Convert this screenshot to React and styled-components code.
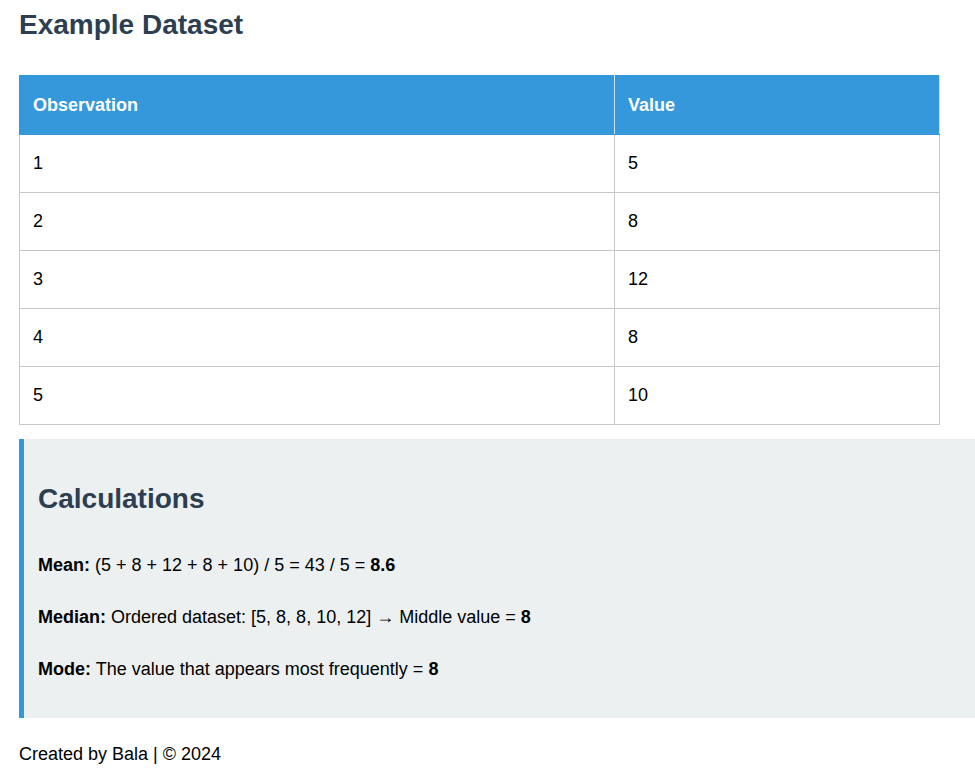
import React from "react";
import styled, { createGlobalStyle } from "styled-components";

const Global = createGlobalStyle`
  body { margin: 0; font-family: "Liberation Sans", Arial, sans-serif; color: #000; background: #fff; overflow: hidden; }
`;
const Page = styled.div`padding: 0 19px;`;
const Title = styled.h1`
  margin: 8px 0 33px; font-size: 28px; line-height: 34px; color: #2c3e50; font-weight: 700;
`;
const Table = styled.table`
  border-collapse: collapse; width: 921px; font-size: 18px;
`;
const Th = styled.th`
  background: #3498db; color: #fff; text-align: left; font-weight: 700;
  height: 58px; padding: 0 13px; border: 1px solid #c8c8c8; border-color: #3498db #d0e4f4 #3498db #3498db;
  &:first-child { width: 568px; }
`;
const Td = styled.td`
  height: 57px; padding: 0 13px; border: 1px solid #c8c8c8;
`;
const Box = styled.div`
  margin: 14px -40px 0 0; background: #ecf0f1; border-left: 5px solid #3498db;
  padding: 43px 20px 35px 14px; display: flex; flex-direction: column; gap: 24px;
`;
const H2 = styled.h2`
  margin: 0 0 11px; font-size: 28px; line-height: 34px; color: #2c3e50; font-weight: 700;
`;
const P = styled.p`margin: 0; font-size: 18px; line-height: 28px;`;
const Footer = styled.footer`margin-top: 25px; font-size: 18px; line-height: 22px;`;

const rows = [[1,5],[2,8],[3,12],[4,8],[5,10]];

export default function App() {
  return (
    <Page>
      <Global />
      <Title>Example Dataset</Title>
      <Table>
        <thead><tr><Th>Observation</Th><Th>Value</Th></tr></thead>
        <tbody>{rows.map(([a,b]) => <tr key={a}><Td>{a}</Td><Td>{b}</Td></tr>)}</tbody>
      </Table>
      <Box>
        <H2>Calculations</H2>
        <P><b>Mean:</b> (5 + 8 + 12 + 8 + 10) / 5 = 43 / 5 = <b>8.6</b></P>
        <P><b>Median:</b> Ordered dataset: [5, 8, 8, 10, 12] → Middle value = <b>8</b></P>
        <P><b>Mode:</b> The value that appears most frequently = <b>8</b></P>
      </Box>
      <Footer>Created by Bala | © 2024</Footer>
    </Page>
  );
}
